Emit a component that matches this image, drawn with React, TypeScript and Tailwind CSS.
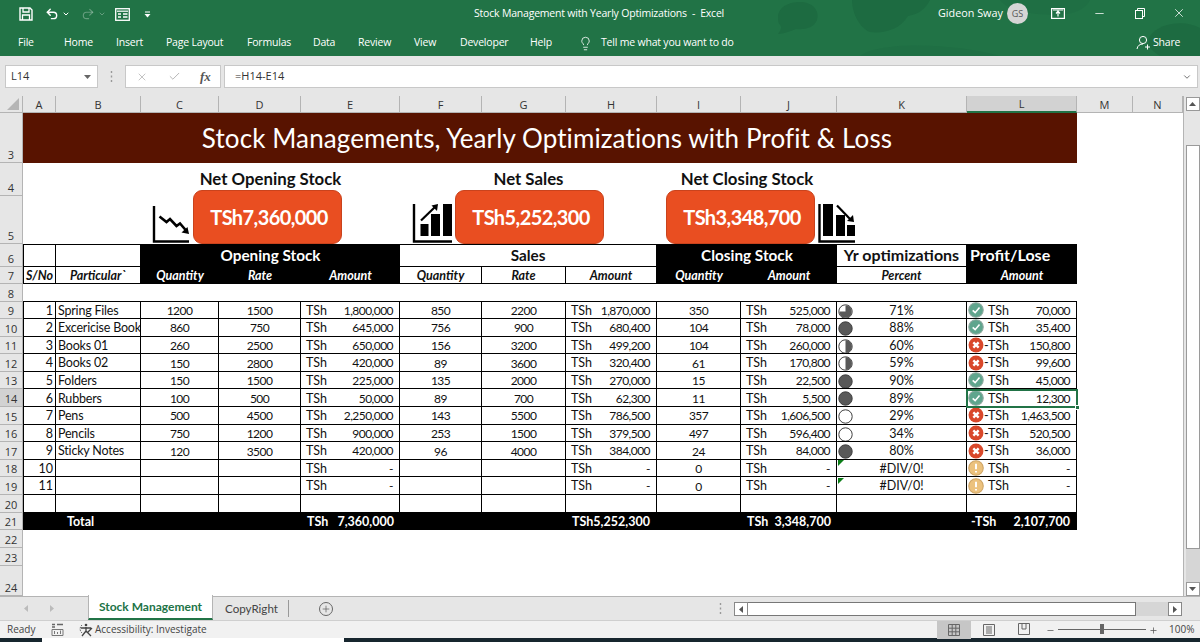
import type { ReactNode } from "react"
import { Lightbulb, X, Check, Minus, Plus, ChevronDown, Undo2, Redo2 } from "lucide-react"

const sans = "font-['Open_Sans','Noto_Sans',sans-serif]"
const sheet = "font-['Lato','Liberation_Sans',sans-serif]"
const num = "text-[12px] tracking-[-0.55px]"

const columns = ["A", "B", "C", "D", "E", "F", "G", "H", "I", "J", "K", "L", "M", "N"]

type Row = {
  no: number
  name: string
  openQty: string
  openRate: string
  openAmt: string
  saleQty: string
  saleRate: string
  saleAmt: string
  closeQty: string
  closeAmt: string
  ball: "full" | "three" | "half" | "empty" | null
  pct: string
  status: "ok" | "bad" | "warn"
  neg: boolean
  profit: string
}

const rows: Row[] = [
  { no: 1, name: "Spring Files", openQty: "1200", openRate: "1500", openAmt: "1,800,000", saleQty: "850", saleRate: "2200", saleAmt: "1,870,000", closeQty: "350", closeAmt: "525,000", ball: "three", pct: "71%", status: "ok", neg: false, profit: "70,000" },
  { no: 2, name: "Excericise Book", openQty: "860", openRate: "750", openAmt: "645,000", saleQty: "756", saleRate: "900", saleAmt: "680,400", closeQty: "104", closeAmt: "78,000", ball: "full", pct: "88%", status: "ok", neg: false, profit: "35,400" },
  { no: 3, name: "Books 01", openQty: "260", openRate: "2500", openAmt: "650,000", saleQty: "156", saleRate: "3200", saleAmt: "499,200", closeQty: "104", closeAmt: "260,000", ball: "half", pct: "60%", status: "bad", neg: true, profit: "150,800" },
  { no: 4, name: "Books 02", openQty: "150", openRate: "2800", openAmt: "420,000", saleQty: "89", saleRate: "3600", saleAmt: "320,400", closeQty: "61", closeAmt: "170,800", ball: "half", pct: "59%", status: "bad", neg: true, profit: "99,600" },
  { no: 5, name: "Folders", openQty: "150", openRate: "1500", openAmt: "225,000", saleQty: "135", saleRate: "2000", saleAmt: "270,000", closeQty: "15", closeAmt: "22,500", ball: "full", pct: "90%", status: "ok", neg: false, profit: "45,000" },
  { no: 6, name: "Rubbers", openQty: "100", openRate: "500", openAmt: "50,000", saleQty: "89", saleRate: "700", saleAmt: "62,300", closeQty: "11", closeAmt: "5,500", ball: "full", pct: "89%", status: "ok", neg: false, profit: "12,300" },
  { no: 7, name: "Pens", openQty: "500", openRate: "4500", openAmt: "2,250,000", saleQty: "143", saleRate: "5500", saleAmt: "786,500", closeQty: "357", closeAmt: "1,606,500", ball: "empty", pct: "29%", status: "bad", neg: true, profit: "1,463,500" },
  { no: 8, name: "Pencils", openQty: "750", openRate: "1200", openAmt: "900,000", saleQty: "253", saleRate: "1500", saleAmt: "379,500", closeQty: "497", closeAmt: "596,400", ball: "empty", pct: "34%", status: "bad", neg: true, profit: "520,500" },
  { no: 9, name: "Sticky Notes", openQty: "120", openRate: "3500", openAmt: "420,000", saleQty: "96", saleRate: "4000", saleAmt: "384,000", closeQty: "24", closeAmt: "84,000", ball: "full", pct: "80%", status: "bad", neg: true, profit: "36,000" },
  { no: 10, name: "", openQty: "", openRate: "", openAmt: "-", saleQty: "", saleRate: "", saleAmt: "-", closeQty: "0", closeAmt: "-", ball: null, pct: "#DIV/0!", status: "warn", neg: false, profit: "-" },
  { no: 11, name: "", openQty: "", openRate: "", openAmt: "-", saleQty: "", saleRate: "", saleAmt: "-", closeQty: "0", closeAmt: "-", ball: null, pct: "#DIV/0!", status: "warn", neg: false, profit: "-" },
]

function RowHead({ n, active }: { n: number; active?: boolean }) {
  return (
    <div className={`col-start-1 flex items-end justify-center border-r border-b border-[#b4b4b4] text-[11px] leading-[14px] text-[#333] ${sans} ${active ? "bg-[#d2d2d2]" : "bg-[#e6e6e6]"}`}>
      {n}
    </div>
  )
}

function Ball({ kind }: { kind: "full" | "three" | "half" | "empty" }) {
  return (
    <svg width="15" height="15" viewBox="0 0 15 15" className="shrink-0">
      <circle cx="7.5" cy="7.5" r="6.7" fill={kind === "full" ? "#595959" : "#fff"} stroke="#3f3f3f" strokeWidth="1" />
      {kind === "three" && <path d="M7.5 7.5V1.2A6.3 6.3 0 1 1 1.2 7.5Z" fill="#595959" />}
      {kind === "half" && <path d="M7.5 1A6.5 6.5 0 0 1 7.5 14Z" fill="#595959" />}
    </svg>
  )
}

function Status({ kind }: { kind: "ok" | "bad" | "warn" }) {
  if (kind === "ok") {
    return (
      <svg width="16" height="16" viewBox="0 0 15 15" className="shrink-0">
        <circle cx="7.5" cy="7.5" r="6.8" fill="#5fa58d" stroke="#8fa9a0" />
        <path d="M4.4 7.8 6.7 10 10.8 5.2" fill="none" stroke="#fff" strokeWidth="1.5" />
      </svg>
    )
  }
  if (kind === "bad") {
    return (
      <svg width="16" height="16" viewBox="0 0 15 15" className="shrink-0">
        <circle cx="7.5" cy="7.5" r="7" fill="#d9482b" />
        <path d="M5 5 10 10M10 5 5 10" fill="none" stroke="#fff" strokeWidth="2.2" />
      </svg>
    )
  }
  return (
    <svg width="16" height="16" viewBox="0 0 15 15" className="shrink-0">
      <circle cx="7.5" cy="7.5" r="6.8" fill="#ecc27e" stroke="#cfa566" />
      <path d="M7.5 3.4V8.6M7.5 10.2V11.8" fill="none" stroke="#fff" strokeWidth="1.8" />
    </svg>
  )
}

function Cell({ children, className = "" }: { children?: ReactNode; className?: string }) {
  return <div className={`flex items-center overflow-hidden whitespace-nowrap border-r border-b border-black px-[2px] ${className}`}>{children}</div>
}

function Amount({ value }: { value: string }) {
  return (
    <Cell className="pl-[5px] pr-[6px] pt-[2px]">
      <div className="flex w-full items-baseline justify-between">
        <span>TSh</span>
        <span className={num}>{value}</span>
      </div>
    </Cell>
  )
}

function Shape({ className, children }: { className: string; children: ReactNode }) {
  return (
    <div className={`absolute flex h-[54px] w-[149px] items-center justify-center rounded-[9px] border border-[#c9431d] bg-[#e94e21] pl-[3px] text-[20px] font-bold tracking-[-0.6px] text-white ${className}`}>
      {children}
    </div>
  )
}

function DataRow({ row: r, rowNumber }: { row: Row; rowNumber: number }) {
  return (
    <>
      <RowHead n={rowNumber} active={rowNumber === 14} />
      <Cell className="justify-end border-l pt-[2px]">{r.no}</Cell>
      <Cell className="pt-[2px] pr-0 tracking-[-0.2px]">{r.name}</Cell>
      <Cell className={`justify-center pt-[2px] ${num}`}>{r.openQty}</Cell>
      <Cell className={`justify-center pt-[2px] ${num}`}>{r.openRate}</Cell>
      <Amount value={r.openAmt} />
      <Cell className={`justify-center pt-[2px] ${num}`}>{r.saleQty}</Cell>
      <Cell className={`justify-center pt-[2px] ${num}`}>{r.saleRate}</Cell>
      <Amount value={r.saleAmt} />
      <Cell className={`justify-center pt-[2px] ${num}`}>{r.closeQty}</Cell>
      <Amount value={r.closeAmt} />
      <Cell className="relative justify-center pt-[2px]">
        {r.ball && (
          <span className="absolute left-[1px] top-[2px]">
            <Ball kind={r.ball} />
          </span>
        )}
        {r.pct}
      </Cell>
      <Cell className="pl-[1px] pr-[6px]">
        <Status kind={r.status} />
        <div className={`flex flex-1 items-baseline justify-between pt-[2px] ${r.neg ? "ml-0" : "ml-[4px]"}`}>
          <span>{r.neg ? "-TSh" : "TSh"}</span>
          <span className={num}>{r.profit}</span>
        </div>
      </Cell>
    </>
  )
}

function SheetGrid() {
  return (
    <div className={`relative h-[500px] w-[1183px] overflow-hidden bg-white text-[12.5px] leading-none text-[#111] ${sheet}`}>
      <div className="grid grid-cols-[23px_33px_85px_78px_82px_99px_82px_84px_91px_84px_96px_130px_110px_56px_50px] grid-rows-[17px_50px_33px_48px_22.5px_17.5px_17.5px_repeat(13,17.6px)_18px_18px_30px]">
        {/* column letters */}
        <div className="relative border-r border-b border-[#b4b4b4] bg-[#e6e6e6]">
          <svg width="14" height="14" viewBox="0 0 14 14" className="absolute right-[2px] bottom-[1px]">
            <path d="M13 1V13H1Z" fill="#b5b5b5" />
          </svg>
        </div>
        {columns.map((c) => (
          <div
            key={c}
            className={`flex items-center justify-center border-r text-[11px] text-[#333] ${sans} ${c === "L" ? "border-b-2 border-r-[#b4b4b4] border-b-[#217346] bg-[#d2d2d2]" : "border-b border-[#b4b4b4] bg-[#e6e6e6]"}`}
          >
            {c}
          </div>
        ))}

        {/* title */}
        <RowHead n={3} />
        <div className="col-span-12 flex items-center justify-center bg-[#581300] pr-[6px] text-[26px] tracking-[0.1px] text-white">
          Stock Managements, Yearly Optimizations with Profit &amp; Loss
        </div>

        {/* net figures */}
        <RowHead n={4} />
        <div className="col-span-2" />
        <div className="col-span-3 flex items-center justify-center text-[16.8px] font-bold">Net Opening Stock</div>
        <div className="col-span-3 flex items-center justify-center text-[16.8px] font-bold">Net Sales</div>
        <div className="col-span-2 flex items-center justify-center text-[16.8px] font-bold">Net Closing Stock</div>

        <RowHead n={5} />

        {/* group headers */}
        <RowHead n={6} />
        <Cell className="border-t border-l" />
        <Cell className="border-t" />
        <div className="col-span-3 flex items-center justify-center bg-black text-[15.3px] font-bold text-white">Opening Stock</div>
        <Cell className="col-span-3 justify-center border-t text-[15.3px] font-bold">Sales</Cell>
        <div className="col-span-2 flex items-center justify-center bg-black text-[15.3px] font-bold text-white">Closing Stock</div>
        <Cell className="justify-center border-t text-[16px] font-bold">Yr optimizations</Cell>
        <div className="flex items-center bg-black pl-[3px] text-[16px] font-bold text-white">Profit/Lose</div>

        <RowHead n={7} />
        <Cell className="justify-center border-l pt-[2px] font-bold italic">S/No</Cell>
        <Cell className="justify-center pt-[2px] font-bold italic">Particular`</Cell>
        <div className="flex items-center justify-center bg-black pt-[2px] font-bold italic text-white">Quantity</div>
        <div className="flex items-center justify-center bg-black pt-[2px] font-bold italic text-white">Rate</div>
        <div className="flex items-center justify-center bg-black pt-[2px] font-bold italic text-white">Amount</div>
        <Cell className="justify-center pt-[2px] font-bold italic">Quantity</Cell>
        <Cell className="justify-center pt-[2px] font-bold italic">Rate</Cell>
        <Cell className="justify-center pt-[2px] font-bold italic">Amount</Cell>
        <div className="flex items-center justify-center bg-black pt-[2px] font-bold italic text-white">Quantity</div>
        <div className="flex items-center justify-center bg-black pt-[2px] font-bold italic text-white">Amount</div>
        <Cell className="justify-center pt-[2px] font-bold italic">Percent</Cell>
        <div className="flex items-center justify-center bg-black pt-[2px] font-bold italic text-white">Amount</div>

        <RowHead n={8} />
        <div className="col-span-12 border-b border-black" />

        {/* data */}
        {rows.map((r, i) => (
          <DataRow key={r.no} row={r} rowNumber={9 + i} />
        ))}

        {/* spacer row */}
        <RowHead n={20} />
        <Cell className="border-l" />
        <Cell />
        <Cell />
        <Cell />
        <Cell />
        <Cell />
        <Cell />
        <Cell />
        <Cell />
        <Cell />
        <Cell />
        <Cell />

        {/* total */}
        <RowHead n={21} />
        <div className="col-span-2 flex items-center bg-black pl-[44px] pt-[2px] font-bold text-white">Total</div>
        <div className="col-span-2 bg-black" />
        <div className="flex items-center justify-between bg-black pl-[6px] pr-[6px] pt-[2px] font-bold text-white"><span>TSh</span><span>7,360,000</span></div>
        <div className="col-span-2 bg-black" />
        <div className="flex items-center justify-between bg-black pl-[6px] pr-[6px] pt-[2px] font-bold text-white"><span>TSh5,252,300</span></div>
        <div className="bg-black" />
        <div className="flex items-center justify-between bg-black pl-[6px] pr-[6px] pt-[2px] font-bold text-white"><span>TSh</span><span>3,348,700</span></div>
        <div className="bg-black" />
        <div className="flex items-center justify-between bg-black pl-[4px] pr-[7px] pt-[2px] font-bold text-white"><span>-TSh</span><span>2,107,700</span></div>

        <RowHead n={22} />
        <RowHead n={23} />
        <RowHead n={24} />
      </div>

      {/* floating shapes */}
      <Shape className="left-[193px] top-[94px]">TSh7,360,000</Shape>
      <Shape className="left-[455px] top-[94px]">TSh5,252,300</Shape>
      <Shape className="left-[666px] top-[94px]">TSh3,348,700</Shape>

      <svg width="40" height="40" viewBox="0 0 40 40" className="absolute left-[151px] top-[108px]">
        <path d="M3 2V37.5H38" fill="none" stroke="#000" strokeWidth="2.4" />
        <path d="M8.5 12.5 15.5 18 19 15 25.5 22 29 19.5 35.5 27" fill="none" stroke="#000" strokeWidth="2.6" />
        <path d="M38 30 30.5 28.5 36.5 23Z" fill="#000" />
      </svg>
      <svg width="42" height="42" viewBox="0 0 42 42" className="absolute left-[412px] top-[107px]">
        <path d="M2 1V38.5H40" fill="none" stroke="#000" strokeWidth="2.4" />
        <rect x="8.5" y="21" width="8" height="12" fill="#000" />
        <rect x="19" y="11" width="9" height="22" fill="#000" />
        <rect x="31" y="1" width="9" height="32" fill="#000" />
        <path d="M9 17.5 23 4" fill="none" stroke="#000" strokeWidth="2.2" />
        <path d="M26 1 25 8 19.5 2.5Z" fill="#000" />
      </svg>
      <svg width="40" height="42" viewBox="0 0 40 42" className="absolute left-[817px] top-[107px]">
        <path d="M2.5 1V38.5H38" fill="none" stroke="#000" strokeWidth="2.4" />
        <rect x="6" y="1" width="10" height="32" fill="#000" />
        <rect x="19" y="12" width="9" height="21" fill="#000" />
        <rect x="30" y="22" width="8" height="11" fill="#000" />
        <path d="M20 2.5 33 16" fill="none" stroke="#000" strokeWidth="2.2" />
        <path d="M37 19 30 18 36 12Z" fill="#000" />
      </svg>

      {/* selected cell L14 */}
      <div className="pointer-events-none absolute left-[966px] top-[293px] h-[19px] w-[112px] border-2 border-[#217346]" />
      <div className="absolute left-[1075px] top-[309px] h-[5px] w-[5px] border border-white bg-[#217346]" />

      {/* error markers on K18, K19 */}
      <div className="absolute left-[838px] top-[364px] h-0 w-0 border-t-[6px] border-r-[6px] border-t-[#0a7d16] border-r-transparent" />
      <div className="absolute left-[838px] top-[382px] h-0 w-0 border-t-[6px] border-r-[6px] border-t-[#0a7d16] border-r-transparent" />
    </div>
  )
}

function TitleBar() {
  return (
    <div className={`relative h-[56px] overflow-hidden bg-[#217346] text-white ${sans}`}>
      {/* office background pattern */}
      <svg width="1200" height="56" viewBox="0 0 1200 56" className="absolute left-0 top-0">
        <path d="M778 18C778 6 790 2 800 2C812 2 820 10 817 20C814 28 804 30 796 29C790 31 784 34 778 34C781 30 782 27 780 25C778 23 778 20 778 18Z" fill="#1d6b41" />
        <path d="M852 0H930C926 8 920 14 908 16C900 30 882 34 870 32C860 28 852 14 852 0Z" fill="#1d6b41" />
        <path d="M1000 0H1090C1086 8 1076 14 1062 14C1048 16 1010 14 1000 0Z" fill="#1f6f44" />
        <path d="M1150 36C1160 22 1186 20 1200 28V56H1160C1150 50 1146 44 1150 36Z" fill="#1d6b41" />
        <path d="M860 56C880 40 960 44 1000 56Z" fill="#1f6f44" />
      </svg>

      <div className="relative flex h-[28px] items-center">
        {/* quick access */}
        <svg width="14" height="14" viewBox="0 0 14 14" className="ml-[19px]">
          <path d="M1 1H11L13 3V13H1Z" fill="none" stroke="#fff" strokeWidth="1.4" />
          <path d="M4 1V5H10V1M3.5 13V8H10.5V13" fill="none" stroke="#fff" strokeWidth="1.3" />
        </svg>
        <Undo2 size={14} strokeWidth={2.4} className="ml-[12px]" />
        <ChevronDown size={8} strokeWidth={3} className="ml-[3px]" />
        <Redo2 size={14} strokeWidth={2} className="ml-[11px] text-white/30" />
        <ChevronDown size={8} strokeWidth={3} className="ml-[3px] text-white/30" />
        <svg width="15" height="13" viewBox="0 0 15 13" className="ml-[9px]">
          <rect x="0.7" y="0.7" width="13.6" height="11.6" fill="none" stroke="#fff" strokeWidth="1.3" />
          <path d="M2 3.2H13" stroke="#fff" strokeWidth="1.2" />
          <path d="M3 6H6M3 9H6M8 6H12.5M8 9H12.5" stroke="#fff" strokeWidth="1.6" />
        </svg>
        <svg width="7" height="7" viewBox="0 0 7 7" className="ml-[14px]">
          <path d="M1 1H6" stroke="#fff" strokeWidth="1" />
          <path d="M0.5 3H6.5L3.5 6.5Z" fill="#fff" />
        </svg>

        <div className="absolute left-[474px] top-[5px] whitespace-pre text-[10.5px] leading-[16px] tracking-[-0.2px]">Stock Management with Yearly Optimizations  -  Excel</div>

        <div className="absolute left-[938px] top-[5px] text-[10.8px] leading-[16px]">Gideon Sway</div>
        <div className="absolute left-[1007px] top-[3px] flex h-[21px] w-[21px] items-center justify-center rounded-full bg-[#d5d5d5] text-[9px] text-[#555]">GS</div>
        <svg width="14" height="11" viewBox="0 0 14 11" className="absolute left-[1051px] top-[8px]">
          <rect x="0.6" y="0.6" width="12.8" height="9.8" fill="none" stroke="#fff" strokeWidth="1.2" />
          <path d="M7 8.5V3.5M5 5.5 7 3.2 9 5.5M2 2H12" fill="none" stroke="#fff" strokeWidth="1.2" />
        </svg>
        <Minus size={13} strokeWidth={1.4} className="absolute left-[1093px] top-[7px]" />
        <svg width="10" height="11" viewBox="0 0 10 11" className="absolute left-[1135px] top-[8px]">
          <rect x="0.5" y="2.5" width="7" height="8" fill="none" stroke="#fff" />
          <path d="M2.5 2.5V0.5H9.5V8.5H7.5" fill="none" stroke="#fff" />
        </svg>
        <X size={14} strokeWidth={1.3} className="absolute left-[1172px] top-[6px]" />
      </div>

      <div className="relative flex h-[28px] items-center pt-[2px] pl-[18px] text-[10.5px] tracking-[-0.2px]">
        <span className="w-[46px]">File</span>
        <span className="w-[52px]">Home</span>
        <span className="w-[50px]">Insert</span>
        <span className="w-[81px]">Page Layout</span>
        <span className="w-[66px]">Formulas</span>
        <span className="w-[45px]">Data</span>
        <span className="w-[56px]">Review</span>
        <span className="w-[46px]">View</span>
        <span className="w-[70px]">Developer</span>
        <span className="w-[47px]">Help</span>
        <Lightbulb size={15} strokeWidth={1.3} className="mr-[8px] ml-[1px]" />
        <span>Tell me what you want to do</span>
        <div className="absolute left-[1136px] top-[7px] flex items-center gap-[3px]">
          <svg width="14" height="15" viewBox="0 0 14 15">
            <circle cx="7" cy="5" r="3.6" fill="none" stroke="#fff" strokeWidth="1" />
            <path d="M1 14C1.5 10.5 4 9 7 9M9 12H14M11.5 9.5V14.5" fill="none" stroke="#fff" strokeWidth="1" />
          </svg>
          <span>Share</span>
        </div>
      </div>
    </div>
  )
}

function FormulaBar() {
  return (
    <div className={`flex h-[40px] items-start bg-[#e6e6e6] pl-[5px] pt-[9px] text-[#333] ${sans}`}>
      <div className="flex h-[23px] w-[93px] items-center justify-between border border-[#c8c8c8] bg-white pl-[5px] pr-[6px] text-[11px]">
        <span>L14</span>
        <svg width="7" height="4" viewBox="0 0 7 4">
          <path d="M0 0H7L3.5 4Z" fill="#666" />
        </svg>
      </div>
      <div className="flex h-[23px] w-[27px] items-center justify-center">
        <svg width="3" height="11" viewBox="0 0 3 11">
          <path d="M1.5 0V2M1.5 4.5V6.5M1.5 9V11" stroke="#999" strokeWidth="1.4" />
        </svg>
      </div>
      <div className="flex h-[23px] w-[96px] items-center border border-[#c8c8c8] bg-white pl-[10px]">
        <X size={12} strokeWidth={1.6} className="text-[#b4b4b4]" />
        <Check size={13} strokeWidth={1.8} className="ml-[20px] text-[#b4b4b4]" />
        <span className="ml-[19px] font-['Liberation_Serif',serif] text-[13px] font-bold italic text-[#555]">fx</span>
      </div>
      <div className="ml-[3px] flex h-[23px] w-[974px] items-center justify-between border border-[#c8c8c8] bg-white pl-[10px] pr-[5px] text-[11px]">
        <span>=H14-E14</span>
        <ChevronDown size={10} strokeWidth={2.2} className="text-[#666]" />
      </div>
    </div>
  )
}

function VerticalScroll() {
  return (
    <div className="flex h-[500px] w-[17px] flex-col items-center border-l border-[#b4b4b4] bg-[#e6e6e6] pl-[1px] pt-[1px]">
      <div className="flex h-[14px] w-[14px] items-center justify-center border border-[#999] bg-white">
        <svg width="7" height="4" viewBox="0 0 7 4"><path d="M0 4H7L3.5 0Z" fill="#555" /></svg>
      </div>
      <div className="mt-[34px] h-[404px] w-[14px] border border-[#9a9a9a] bg-white" />
      <div className="h-[33px] w-[14px] bg-[#d6d6d6]" />
      <div className="flex h-[14px] w-[14px] items-center justify-center border border-[#999] bg-white">
        <svg width="7" height="4" viewBox="0 0 7 4"><path d="M0 0H7L3.5 4Z" fill="#555" /></svg>
      </div>
    </div>
  )
}

function SheetTabs() {
  return (
    <div className={`relative flex h-[24px] items-center border-t border-[#b4b4b4] bg-[#e6e6e6] ${sans}`}>
      <svg width="4" height="7" viewBox="0 0 4 7" className="ml-[24px]"><path d="M4 0V7L0 3.5Z" fill="#bbb" /></svg>
      <svg width="4" height="7" viewBox="0 0 4 7" className="ml-[22px]"><path d="M0 0V7L4 3.5Z" fill="#bbb" /></svg>
      <div className={`ml-[34px] -mt-[2px] flex h-[25px] w-[125px] items-center justify-center border-b-2 border-b-[#217346] border-x border-x-[#b4b4b4] bg-white text-[12px] font-bold text-[#217346] ${sheet}`}>
        Stock Management
      </div>
      <span className={`ml-[12px] w-[64px] border-r border-[#999] text-[11.6px] text-[#444] ${sheet}`}>CopyRight</span>
      <div className="ml-[30px] flex h-[14px] w-[14px] items-center justify-center rounded-full border border-[#666]">
        <Plus size={10} strokeWidth={1.6} className="text-[#555]" />
      </div>
      <svg width="3" height="11" viewBox="0 0 3 11" className="absolute left-[719px] top-[6px]">
        <path d="M1.5 0V2M1.5 4.5V6.5M1.5 9V11" stroke="#999" strokeWidth="1.4" />
      </svg>
      {/* horizontal scrollbar */}
      <div className="absolute left-[734px] top-[5px] flex h-[14px] w-[448px] items-center">
        <div className="flex h-[14px] w-[14px] items-center justify-center border border-[#888] bg-white">
          <svg width="4" height="7" viewBox="0 0 4 7"><path d="M4 0V7L0 3.5Z" fill="#555" /></svg>
        </div>
        <div className="h-[14px] w-[388px] border border-l-0 border-[#777] bg-white" />
        <div className="h-[14px] w-[32px] bg-[#d6d6d6]" />
        <div className="flex h-[14px] w-[14px] items-center justify-center border border-[#888] bg-white">
          <svg width="4" height="7" viewBox="0 0 4 7"><path d="M0 0V7L4 3.5Z" fill="#555" /></svg>
        </div>
      </div>
    </div>
  )
}

function StatusBar() {
  return (
    <div className={`relative flex h-[18px] items-center border-t border-[#cfcfcf] bg-[#f1f1f1] pl-[7px] text-[10px] text-[#444] ${sans}`}>
      <span className="w-[27px]">Ready</span>
      <svg width="13" height="13" viewBox="0 0 13 13" className="ml-[17px]">
        <path d="M1 1.5H4M1 4H4M6 1.5H12" stroke="#666" strokeWidth="1.6" />
        <path d="M1 6.5H12V12.5H1ZM3.5 8V11M6.5 9V11M9.5 7.5V11" fill="none" stroke="#777" strokeWidth="1" />
      </svg>
      <svg width="15" height="14" viewBox="0 0 15 14" className="ml-[14px]">
        <path d="M4 2C1.5 4 1.5 8 4 10" fill="none" stroke="#666" strokeWidth="1" strokeDasharray="1.5 1" />
        <circle cx="8" cy="2" r="1.3" fill="#444" />
        <path d="M3 5H13M8 4V8L4 13M8 8 13 13M10 9 14 5" fill="none" stroke="#444" strokeWidth="1.3" />
      </svg>
      <span className="ml-[2px]">Accessibility: Investigate</span>

      <div className="absolute left-[937px] top-0 flex h-[18px] w-[34px] items-center justify-center bg-[#c6c6c6]">
        <svg width="12" height="12" viewBox="0 0 12 12">
          <path d="M0.5 0.5H11.5V11.5H0.5ZM4.2 0.5V11.5M7.8 0.5V11.5M0.5 4.2H11.5M0.5 7.8H11.5" fill="none" stroke="#666" />
        </svg>
      </div>
      <svg width="12" height="12" viewBox="0 0 12 12" className="absolute left-[983px] top-[3px]">
        <path d="M0.5 0.5H11.5V11.5H0.5ZM3 3H9M3 5H9M3 7H9M3 9H9" fill="none" stroke="#666" />
      </svg>
      <svg width="12" height="12" viewBox="0 0 12 12" className="absolute left-[1018px] top-[2px]">
        <path d="M0.5 0.5H11.5V11.5H0.5ZM4 0.5V6H8V0.5" fill="none" stroke="#666" />
      </svg>
      <Minus size={9} strokeWidth={2} className="absolute left-[1046px] top-[5px] text-[#555]" />
      <div className="absolute left-[1058px] top-[8px] h-px w-[88px] bg-[#666]" />
      <div className="absolute left-[1100px] top-[3px] h-[10px] w-[4px] bg-[#666]" />
      <Plus size={9} strokeWidth={2} className="absolute left-[1149px] top-[5px] text-[#555]" />
      <span className="absolute left-[1169px] top-[1px] leading-[15px]">100%</span>
    </div>
  )
}

export default function App() {
  return (
    <div className="h-[642px] w-[1200px] overflow-hidden bg-white">
      <TitleBar />
      <FormulaBar />
      <div className="flex">
        <SheetGrid />
        <VerticalScroll />
      </div>
      <SheetTabs />
      <StatusBar />
      <div className="flex h-[4px]">
        <div className="w-[42px] bg-[#17262e]" />
        <div className="w-[302px] bg-white" />
        <div className="flex-1 bg-[#17262e]" />
      </div>
    </div>
  )
}
